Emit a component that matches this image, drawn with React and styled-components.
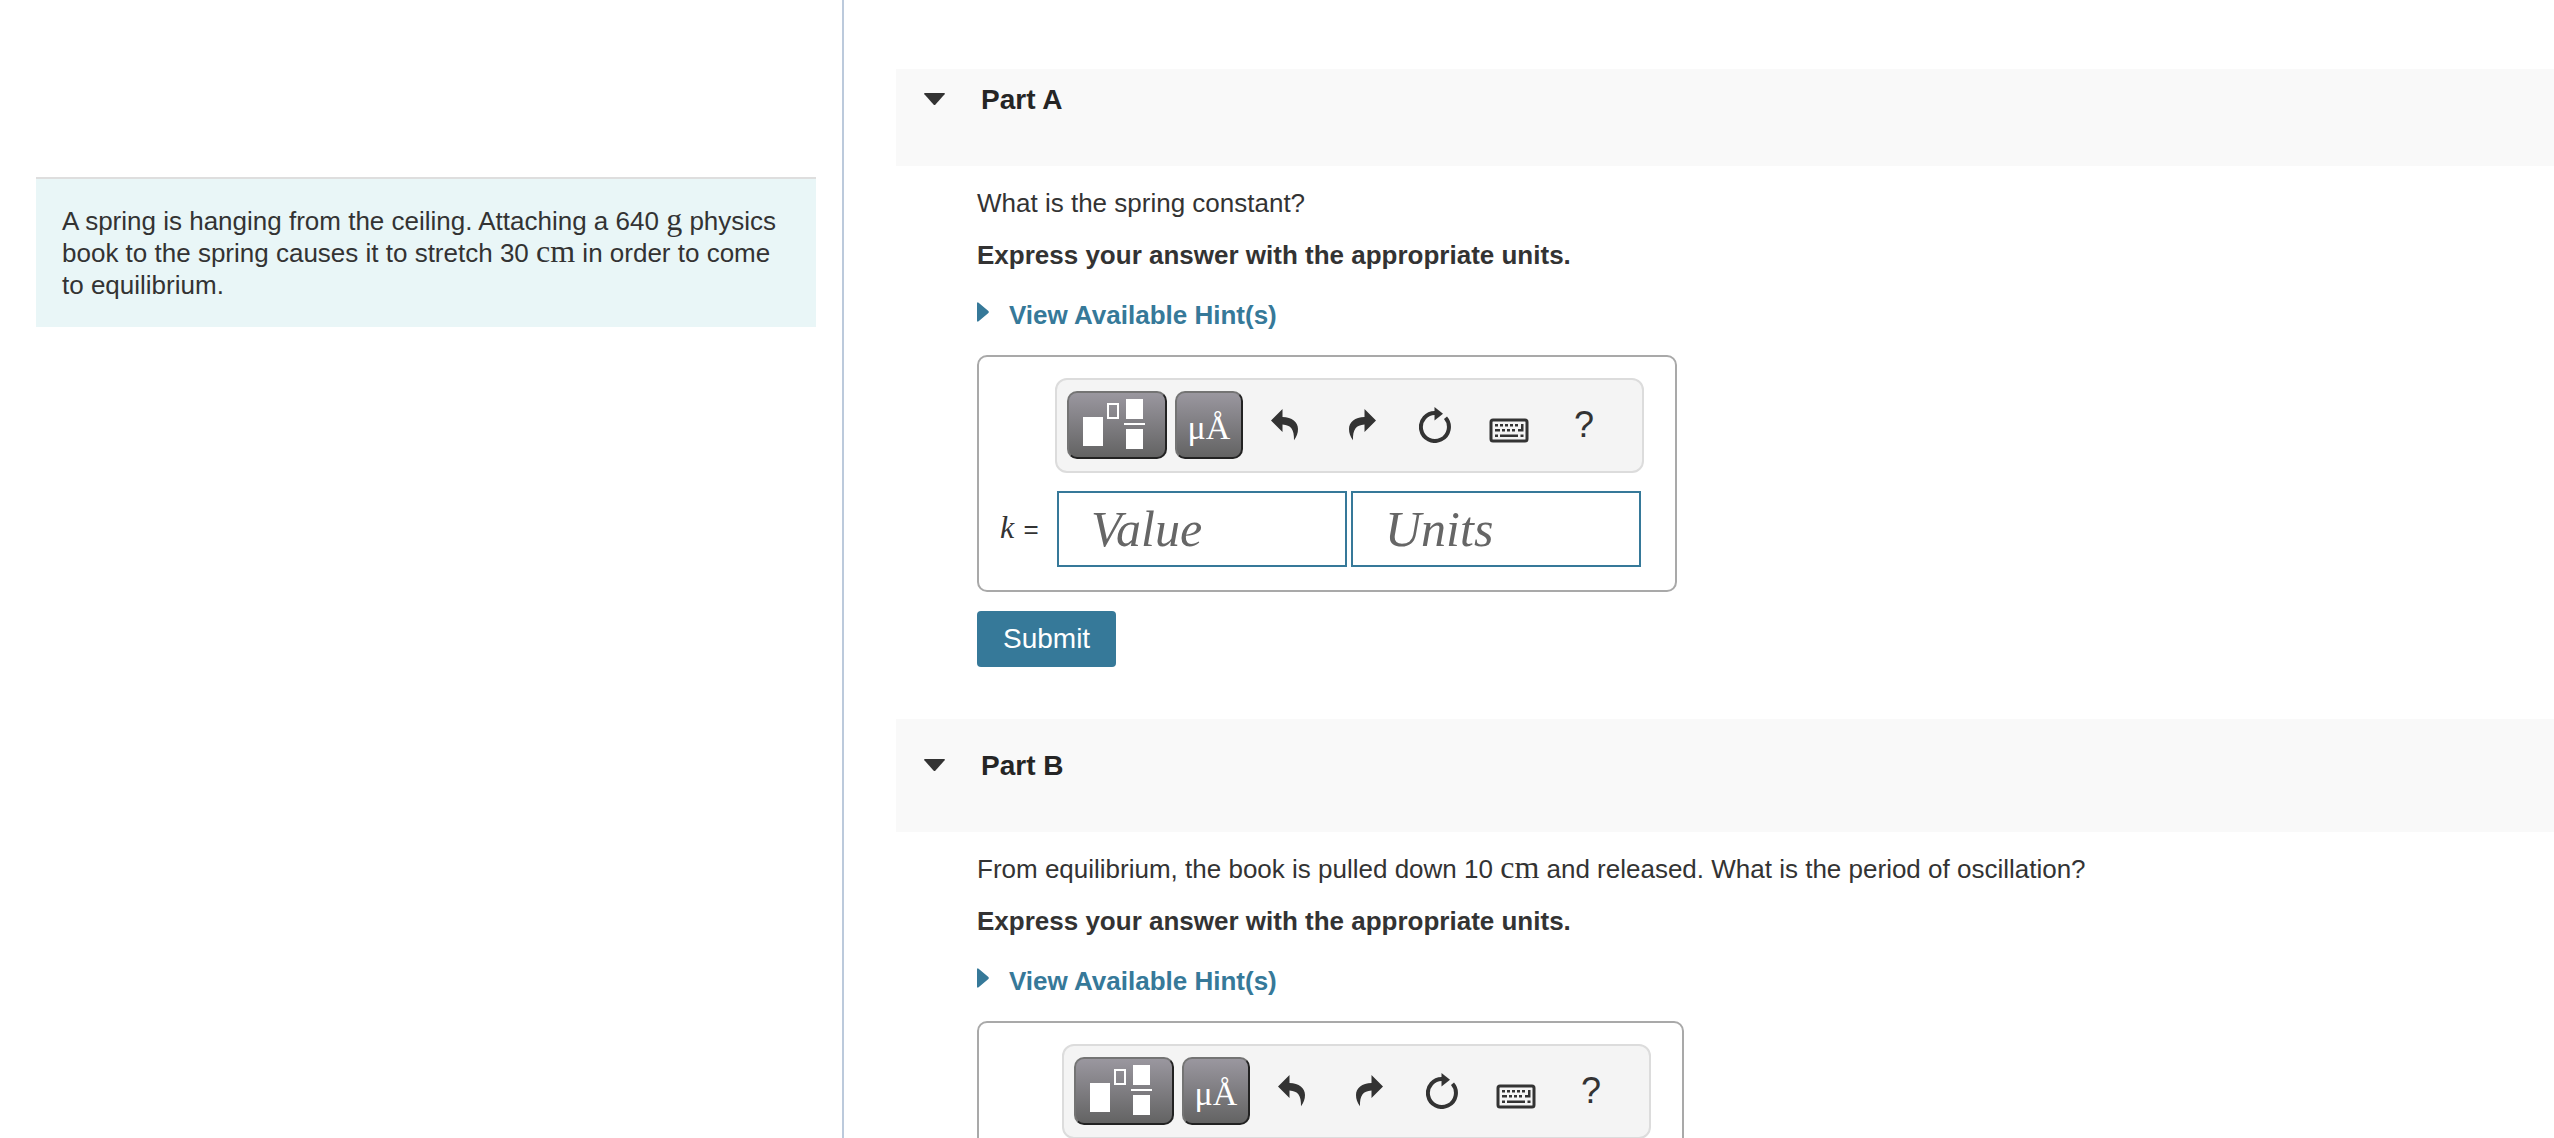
import React, { useState } from 'react';
import styled, { createGlobalStyle, ThemeProvider } from 'styled-components';

const theme = {
    color: {
        text: '#333333',
        heading: '#252525',
        accent: '#367999',
        info: '#e9f6f7',
        band: '#f9f9f9',
        toolbar: '#f4f4f4',
    },
    fonts: {
        body: '"Liberation Sans", Arial, sans-serif',
        math: '"Liberation Serif", "Times New Roman", serif',
    },
};

const GlobalStyle = createGlobalStyle`
    * {
        box-sizing: border-box;
    }

    body {
        margin: 0;
        background-color: #ffffff;
        color: ${theme.color.text};
        font-family: ${theme.fonts.body};
        font-size: 26px;
        line-height: 32px;
    }
`;

const Page = styled.div`
    display: grid;
    grid-template-columns: 844fr 1710fr;
    height: 100vh;
    overflow: hidden;
`;

const Side = styled.aside`
    padding: 177px 26px 0 36px;
    border-right: 2px solid #bccadc;
`;

const Problem = styled.p`
    margin: 0;
    padding: 26px;
    border-top: 2px solid #dedede;
    background-color: ${props => props.theme.color.info};
`;

const Main = styled.main`
    min-width: 0;
    padding: 69px 0 0 52px;
    overflow: hidden;
`;

const PartHeader = styled.header`
    display: flex;
    align-items: center;
    gap: 36px;
    padding: ${props => (props.$first ? '15px' : '31px')} 28px 50px;
    background-color: ${props => props.theme.color.band};
`;

const PartTitle = styled.h2`
    margin: 0;
    font-size: 28px;
    line-height: 32px;
    color: ${props => props.theme.color.heading};
`;

const PlainButton = styled.button`
    display: flex;
    align-items: center;
    padding: 0;
    border: 0;
    background: none;
    color: inherit;
    font: inherit;
    cursor: pointer;
`;

const PartBody = styled.div`
    display: flex;
    flex-direction: column;
    align-items: flex-start;
    padding: 21px 28px 52px 81px;
`;

const Paragraph = styled.p`
    margin: 0 0 20px;
    font-weight: ${props => (props.$bold ? 'bold' : 'normal')};
`;

const Hints = styled(PlainButton)`
    gap: 20px;
    margin: 8px 0 24px;
    color: ${props => props.theme.color.accent};
    font-weight: bold;
`;

const Unit = styled.span`
    font-family: ${props => props.theme.fonts.math};
    font-size: 32px;
    line-height: 28px;
`;

const Variable = styled(Unit)`
    padding-right: 2px;
    font-style: italic;
`;

const AnswerBox = styled.div`
    display: grid;
    grid-template-columns: ${props => props.$labelWidth}px auto;
    row-gap: 18px;
    padding: 21px 31px 23px 21px;
    border: 2px solid #a9a9a9;
    border-radius: 10px;
`;

const Toolbar = styled.div`
    grid-column: 2;
    display: flex;
    align-items: flex-start;
    gap: 8px;
    width: 589px;
    height: 95px;
    padding: 11px 10px;
    border: 2px solid #dcdcdc;
    border-radius: 12px;
    background-color: ${props => props.theme.color.toolbar};
`;

const KeyButton = styled.button`
    display: flex;
    align-items: center;
    justify-content: center;
    width: ${props => (props.$wide ? '100px' : '68px')};
    height: 68px;
    padding: ${props => (props.$wide ? '0' : '6px 0 0')};
    border: 2px solid;
    border-color: #747474 #222222 #222222 #747474;
    border-radius: 10px;
    background: linear-gradient(#9a979f, #636363);
    color: #ffffff;
    font-family: ${props => props.theme.fonts.math};
    font-size: 34px;
    line-height: 40px;
    cursor: pointer;
`;

const Tools = styled.div`
    flex: 1;
    display: flex;
    align-items: center;
    justify-content: space-between;
    height: 68px;
    padding: 0 28px 0 14px;
`;

const ToolButton = styled(PlainButton)`
    justify-content: center;
    width: 40px;
    height: 44px;
    font-size: 36px;
`;

const Label = styled.label`
    align-self: center;
`;

const Fields = styled.div`
    display: flex;
    gap: 4px;
    padding-left: 2px;
`;

const Field = styled.input`
    width: 290px;
    height: 76px;
    padding: 0 32px;
    border: 2px solid ${props => props.theme.color.accent};
    border-radius: 0;
    background-color: #ffffff;
    color: ${props => props.theme.color.text};
    font-family: ${props => props.theme.fonts.math};
    font-size: 50px;
    font-style: italic;

    &::placeholder {
        color: #666666;
        opacity: 1;
    }
`;

const Submit = styled.button`
    height: 56px;
    margin-top: 19px;
    padding: 0 26px;
    border: 0;
    border-radius: 4px;
    background-color: ${props => props.theme.color.accent};
    color: #ffffff;
    font-family: inherit;
    font-size: 28px;
    cursor: pointer;
`;

const Caret = () => (
    <svg width="21" height="14" viewBox="0 0 21 14" fill="currentColor">
        <path d="M1 0h19q1.500 0 .6 1.300L11.500 11.500q-1 1-2 0L.4 1.300Q-.5 0 1 0z" />
    </svg>
);

const HintArrow = () => (
    <svg width="12" height="26" viewBox="0 0 12 26" fill="currentColor">
        <path d="M0 1.200Q.4-.4 1.600.7L11.400 9q.8 1 0 2L1.600 19.300Q.4 20.400 0 18.800z" />
    </svg>
);

const TemplatesIcon = () => (
    <svg width="68" height="52" viewBox="0 0 68 52" fill="#ffffff">
        <rect x="0" y="18" width="20" height="29" />
        <rect x="25" y="5" width="10" height="14" fill="none" stroke="#ffffff" strokeWidth="2" />
        <rect x="43" y="0" width="17" height="20" />
        <rect x="41" y="24" width="21" height="2" />
        <rect x="43" y="30" width="17" height="20" />
    </svg>
);

const UndoIcon = () => (
    <svg width="28" height="32" viewBox="0 0 28 32" fill="currentColor">
        <path d="M0 11.500 11.500 0V8C21 8 27 13 27 20c0 4-1.300 7.500-4 11.200C23.300 20.500 20 16 11.500 15.500V23z" />
    </svg>
);

const RedoIcon = () => (
    <svg width="32" height="32" viewBox="-4 0 32 32" fill="currentColor">
        <path d="M28 11.500 16.500 0V8C7 8 1 13 1 20c0 4 1.300 7.500 4 11.200C4.700 20.500 8 16 16.500 15.500V23z" />
    </svg>
);

const ResetIcon = () => (
    <svg width="32" height="36" viewBox="0 0 32 36">
        <path d="M26.500 10.800A14 14 0 1 1 17 6" fill="none" stroke="currentColor" strokeWidth="4" />
        <path d="M15.500 0 24 6.800 15.500 13.600z" fill="currentColor" />
    </svg>
);

const KeyboardIcon = () => (
    <svg width="40" height="44" viewBox="0 0 40 44" fill="currentColor">
        <rect x="2" y="17" width="36" height="21" rx="2" fill="none" stroke="currentColor" strokeWidth="3" />
        <path d="M6 21h3v2.500H6zM11 21h3v2.500h-3zM16 21h3v2.500h-3zM21 21h3v2.500h-3zM26 21h3v2.500h-3zM32 21h2.500v7.500H29V26h3z" />
        <path d="M6 26h5v2.500H6zM13 26h3v2.500h-3zM18 26h3v2.500h-3zM23 26h3v2.500h-3zM6 31.500h3V34H6zM11 31.500h18V34H11zM31.500 31.500h3V34h-3z" />
    </svg>
);

const Answer = ({ id, symbol, labelWidth }) => {
    const [value, setValue] = useState('');
    const [units, setUnits] = useState('');
    return (
        <AnswerBox $labelWidth={labelWidth}>
            <Toolbar>
                <KeyButton type="button" $wide aria-label="Templates"><TemplatesIcon /></KeyButton>
                <KeyButton type="button">μÅ</KeyButton>
                <Tools>
                    <ToolButton type="button" aria-label="Undo"><UndoIcon /></ToolButton>
                    <ToolButton type="button" aria-label="Redo"><RedoIcon /></ToolButton>
                    <ToolButton type="button" aria-label="Reset"><ResetIcon /></ToolButton>
                    <ToolButton type="button" aria-label="Keyboard shortcuts"><KeyboardIcon /></ToolButton>
                    <ToolButton type="button">?</ToolButton>
                </Tools>
            </Toolbar>
            <Label htmlFor={`${id}-value`}><Variable>{symbol}</Variable> =</Label>
            <Fields>
                <Field
                    id={`${id}-value`}
                    placeholder="Value"
                    value={value}
                    onChange={e => setValue(e.target.value)}
                />
                <Field
                    aria-label="Units"
                    placeholder="Units"
                    value={units}
                    onChange={e => setUnits(e.target.value)}
                />
            </Fields>
        </AnswerBox>
    );
}

const Part = ({ id, title, first, symbol, labelWidth, children }) => {
    const [open, setOpen] = useState(true);
    return (
        <section>
            <PartHeader $first={first}>
                <PlainButton
                    type="button"
                    aria-label={title}
                    aria-expanded={open}
                    onClick={() => setOpen(open => !open)}
                >
                    <Caret />
                </PlainButton>
                <PartTitle>{title}</PartTitle>
            </PartHeader>
            {open && (
                <PartBody>
                    <Paragraph>{children}</Paragraph>
                    <Paragraph $bold>Express your answer with the appropriate units.</Paragraph>
                    <Hints type="button"><HintArrow />View Available Hint(s)</Hints>
                    <Answer id={id} symbol={symbol} labelWidth={labelWidth} />
                    <Submit type="button">Submit</Submit>
                </PartBody>
            )}
        </section>
    );
}

const App = () => (
    <ThemeProvider theme={theme}>
        <GlobalStyle />
        <Page>
            <Side>
                <Problem>
                    A spring is hanging from the ceiling. Attaching a 640 <Unit>g</Unit> physics
                    book to the spring causes it to stretch 30 <Unit>cm</Unit> in order to come
                    to equilibrium.
                </Problem>
            </Side>
            <Main>
                <Part id="part-a" title="Part A" first symbol="k" labelWidth={55}>
                    What is the spring constant?
                </Part>
                <Part id="part-b" title="Part B" symbol="T" labelWidth={62}>
                    From equilibrium, the book is pulled down 10 <Unit>cm</Unit> and released. What is the period of oscillation?
                </Part>
            </Main>
        </Page>
    </ThemeProvider>
);

export default App;
